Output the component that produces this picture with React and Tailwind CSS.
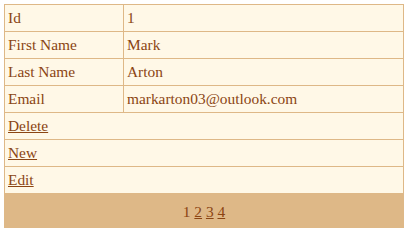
import React from "react";

const rows = [
  ["Id", "1"],
  ["First Name", "Mark"],
  ["Last Name", "Arton"],
  ["Email", "markarton03@outlook.com"],
];

const links = ["Delete", "New", "Edit"];

export default function App() {
  return (
    <div className="p-1 bg-white font-['Liberation_Serif','Times_New_Roman',serif]">
      <table className="w-[400px] border-collapse font-['Liberation_Serif','Times_New_Roman',serif] text-[15.4px] text-[#8b4513] bg-[#fff8e7]">
        <tbody>
          {rows.map(([label, value]) => (
            <tr key={label} className="h-[27px]">
              <td className="w-[119px] border border-[#deb887] px-[3px] py-0 leading-[26px]">{label}</td>
              <td className="border border-[#deb887] px-[3px] py-0 leading-[26px]">{value}</td>
            </tr>
          ))}
          {links.map((l) => (
            <tr key={l} className="h-[27px]">
              <td colSpan={2} className="border border-[#deb887] px-[3px] py-0 leading-[26px]">
                <a href="#" className="underline text-[#8b4513]">{l}</a>
              </td>
            </tr>
          ))}
          <tr className="h-[34px] bg-[#deb887]">
            <td colSpan={2} className="text-center border-x border-[#deb887] pt-[2px] leading-[32px]">
              1 <a href="#" className="underline">2</a> <a href="#" className="underline">3</a>{" "}
              <a href="#" className="underline">4</a>
            </td>
          </tr>
        </tbody>
      </table>
    </div>
  );
}
